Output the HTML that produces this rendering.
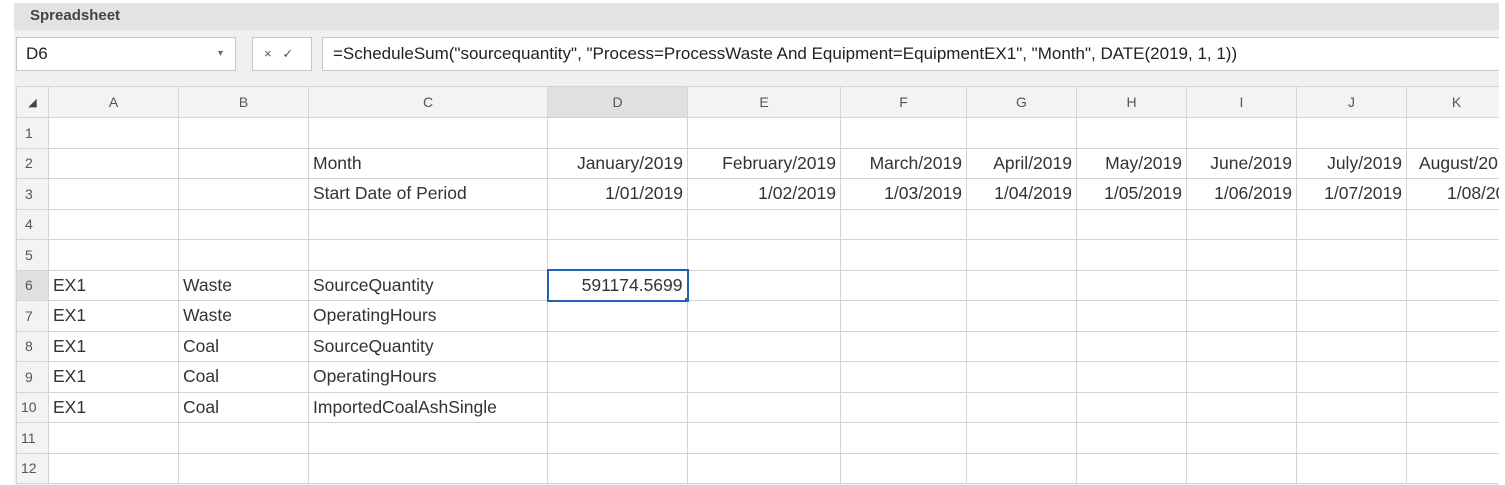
<!DOCTYPE html>
<html><head><style>
body{margin:0;width:1505px;height:485px;background:#fff;overflow:hidden;font-family:"Liberation Sans",sans-serif;position:relative}
#panel{position:absolute;left:14px;top:3px;width:1485px;height:482px;background:#f0f0f0;overflow:hidden}
#title{position:absolute;left:0;top:0;width:1485px;height:27px;background:#e3e3e3;font-weight:bold;font-size:15px;color:#444;line-height:26px;padding-left:16px;box-sizing:border-box}
.box{position:absolute;top:34px;height:34px;background:#fff;border:1px solid #c6c6c6;box-sizing:border-box;font-size:17px;color:#222;line-height:32px}
table{position:absolute;left:2px;top:83px;width:1490px;border-collapse:collapse;table-layout:fixed;background:#fff}
td{border:1px solid #d4d4d4;height:30.5px;padding:0 4px;font-size:17.5px;color:#333;white-space:nowrap;overflow:hidden;box-sizing:border-box}
tr.h td{background:#f3f3f3;text-align:center;font-size:14px;color:#555;height:31px}
td.rh{background:#f3f3f3;text-align:left;font-size:14px;color:#555;padding-left:8px}
.r{text-align:right}
</style></head><body>
<div id="panel">
<div id="title">Spreadsheet</div>
<div class="box" style="left:2px;width:220px;padding-left:9px">D6<span style="position:absolute;right:12px;font-size:10px;color:#666">▾</span></div>
<div class="box" style="left:238px;width:60px;font-size:13px;color:#555;padding-left:11px">×&nbsp;&nbsp;&nbsp;✓</div>
<div class="box" style="left:308px;width:1180px;padding-left:10px;border-right:none">=ScheduleSum("sourcequantity", "Process=ProcessWaste And Equipment=EquipmentEX1", "Month", DATE(2019, 1, 1))</div>
<table>
<colgroup><col style="width:32px"><col style="width:130px"><col style="width:130px"><col style="width:239px"><col style="width:140px"><col style="width:153px"><col style="width:126px"><col style="width:110px"><col style="width:110px"><col style="width:110px"><col style="width:110px"><col style="width:100px"></colgroup>
<tr class="h"><td style="font-size:11px;color:#444">◢</td><td>A</td><td>B</td><td>C</td><td style="background:#e0e0e0">D</td><td>E</td><td>F</td><td>G</td><td>H</td><td>I</td><td>J</td><td>K</td></tr>
<tr><td class="rh">1</td><td></td><td></td><td></td><td></td><td></td><td></td><td></td><td></td><td></td><td></td><td></td></tr>
<tr><td class="rh">2</td><td></td><td></td><td>Month</td><td class="r">January/2019</td><td class="r">February/2019</td><td class="r">March/2019</td><td class="r">April/2019</td><td class="r">May/2019</td><td class="r">June/2019</td><td class="r">July/2019</td><td style="padding-left:12px">August/2019</td></tr>
<tr><td class="rh">3</td><td></td><td></td><td>Start Date of Period</td><td class="r">1/01/2019</td><td class="r">1/02/2019</td><td class="r">1/03/2019</td><td class="r">1/04/2019</td><td class="r">1/05/2019</td><td class="r">1/06/2019</td><td class="r">1/07/2019</td><td style="padding-left:40px">1/08/2019</td></tr>
<tr><td class="rh">4</td><td></td><td></td><td></td><td></td><td></td><td></td><td></td><td></td><td></td><td></td><td></td></tr>
<tr><td class="rh">5</td><td></td><td></td><td></td><td></td><td></td><td></td><td></td><td></td><td></td><td></td><td></td></tr>
<tr><td class="rh" style="background:#e0e0e0">6</td><td>EX1</td><td>Waste</td><td>SourceQuantity</td><td class="r" style="border:2px solid #1f63b8;position:relative">591174.5699<span style="position:absolute;right:-4px;bottom:-4px;width:6px;height:6px;background:#1f63b8"></span></td><td></td><td></td><td></td><td></td><td></td><td></td><td></td></tr>
<tr><td class="rh">7</td><td>EX1</td><td>Waste</td><td>OperatingHours</td><td></td><td></td><td></td><td></td><td></td><td></td><td></td><td></td></tr>
<tr><td class="rh">8</td><td>EX1</td><td>Coal</td><td>SourceQuantity</td><td></td><td></td><td></td><td></td><td></td><td></td><td></td><td></td></tr>
<tr><td class="rh">9</td><td>EX1</td><td>Coal</td><td>OperatingHours</td><td></td><td></td><td></td><td></td><td></td><td></td><td></td><td></td></tr>
<tr><td class="rh" style="padding-left:4px">10</td><td>EX1</td><td>Coal</td><td>ImportedCoalAshSingle</td><td></td><td></td><td></td><td></td><td></td><td></td><td></td><td></td></tr>
<tr><td class="rh" style="padding-left:4px">11</td><td></td><td></td><td></td><td></td><td></td><td></td><td></td><td></td><td></td><td></td><td></td></tr>
<tr><td class="rh" style="padding-left:4px">12</td><td></td><td></td><td></td><td></td><td></td><td></td><td></td><td></td><td></td><td></td><td></td></tr>
</table>
</div>
</body></html>
